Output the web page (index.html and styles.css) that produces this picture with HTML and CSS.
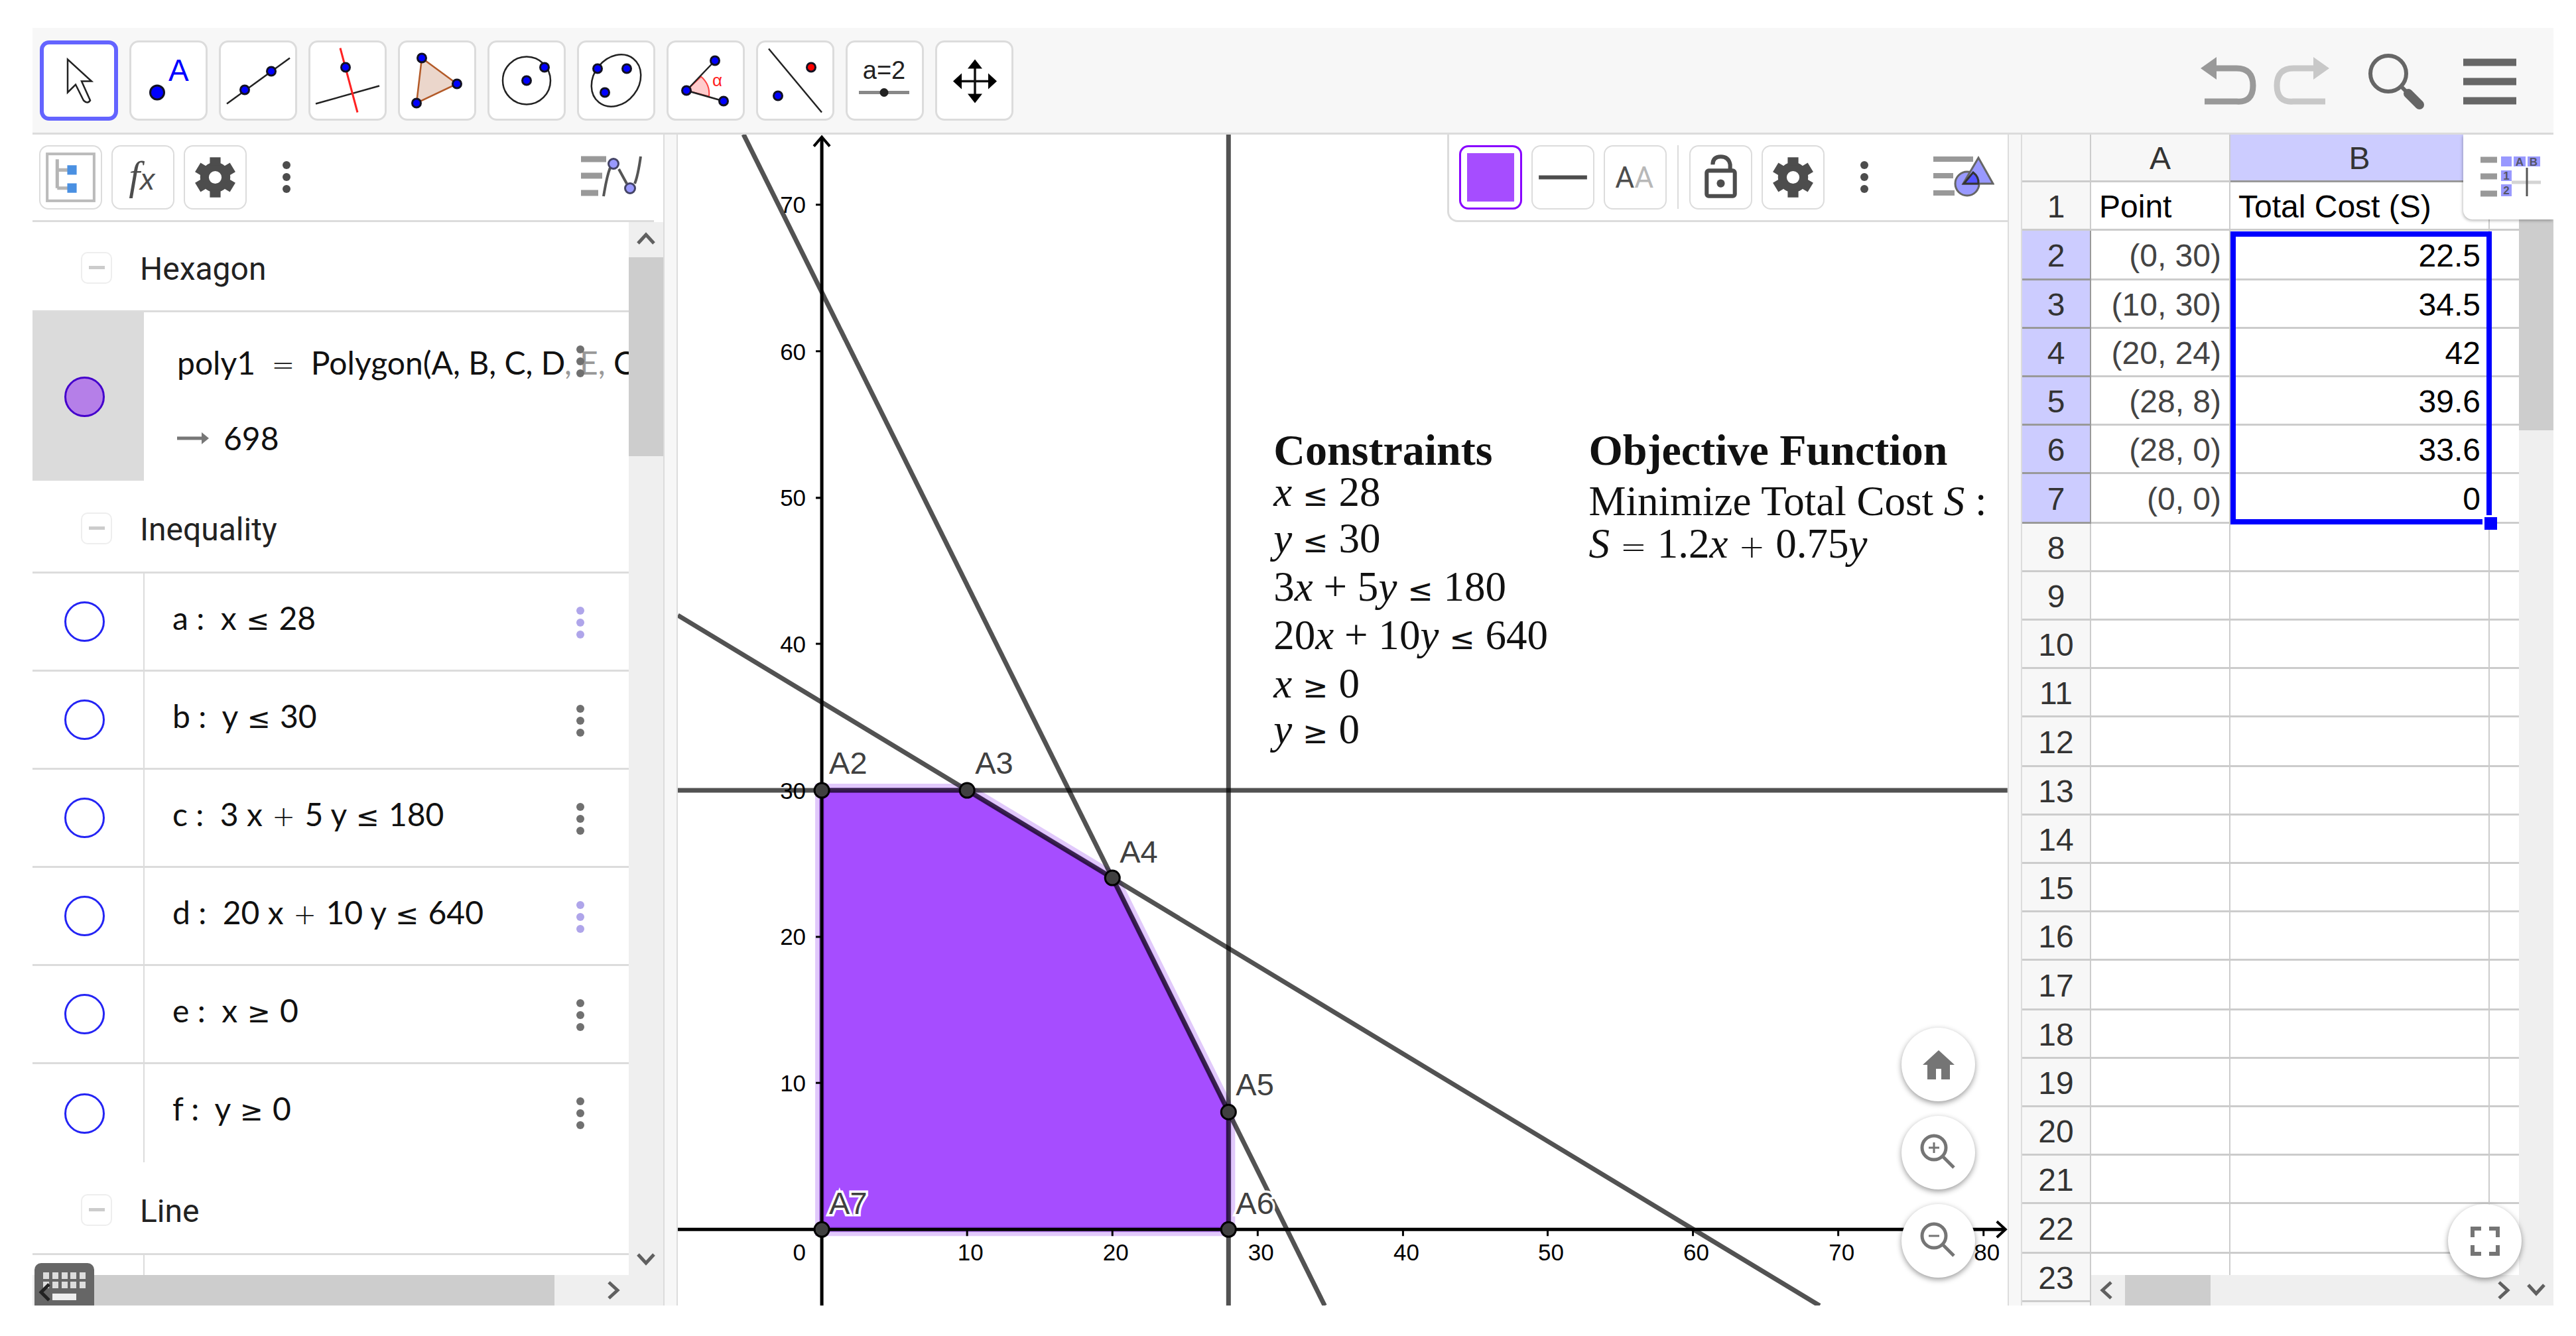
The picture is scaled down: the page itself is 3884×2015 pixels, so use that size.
FILE: index.html
```html
<!DOCTYPE html>
<html lang="en">
<head>
<meta charset="utf-8">
<title>GeoGebra Classic</title>
<link rel="stylesheet" href="styles.css">
</head>
<body>
<main class="app">
  <header class="toolbar">
    <nav class="tools" aria-label="Tools">
      <button class="tool selected" aria-label="Move"><svg viewBox="0 0 118 120"><path d="M42 28V78L54 66L66 90Q72 96 76 90L63 61H78Z" fill="#fff" stroke="#222" stroke-width="2.5"/></svg></button>
      <button class="tool" aria-label="Point"><svg viewBox="0 0 118 120"><circle cx="42" cy="78" r="10.5" class="dot"/><text x="59" y="60" class="ic-a">A</text></svg></button>
      <button class="tool" aria-label="Line"><svg viewBox="0 0 118 120"><path d="M12 95L107 26" class="thin"/><circle cx="39" cy="74" r="6.5" class="dot"/><circle cx="79" cy="46" r="6.5" class="dot"/></svg></button>
      <button class="tool" aria-label="Perpendicular Line"><svg viewBox="0 0 118 120"><path d="M11 95L107 68" class="thin"/><path d="M48 11L74 108" stroke="#f22" stroke-width="3"/><circle cx="56" cy="40" r="6.5" class="dot"/></svg></button>
      <button class="tool" aria-label="Polygon"><svg viewBox="0 0 118 120"><path d="M36 26L89 65L28 94Z" fill="#ebd6cb" stroke="#b35a28" stroke-width="2.5"/><circle cx="36" cy="26" r="6.5" class="dot"/><circle cx="89" cy="65" r="6.5" class="dot"/><circle cx="28" cy="94" r="6.5" class="dot"/></svg></button>
      <button class="tool" aria-label="Circle with Center"><svg viewBox="0 0 118 120"><circle cx="59" cy="60" r="36" class="thin"/><circle cx="59" cy="60" r="6.5" class="dot"/><circle cx="86" cy="40" r="6.5" class="dot"/></svg></button>
      <button class="tool" aria-label="Ellipse"><svg viewBox="0 0 118 120"><ellipse cx="59" cy="60" rx="42" ry="34" transform="rotate(-52 59 60)" class="thin"/><circle cx="31" cy="42" r="6.5" class="dot"/><circle cx="75" cy="42" r="6.5" class="dot"/><circle cx="42" cy="78" r="6.5" class="dot"/></svg></button>
      <button class="tool" aria-label="Angle"><svg viewBox="0 0 118 120"><path d="M30 75L52 54Q66 66 64 84Z" fill="#fcc" stroke="#f44" stroke-width="2"/><path d="M73 30L30 75L86 91" class="thin"/><circle cx="73" cy="30" r="6.5" class="dot"/><circle cx="30" cy="75" r="6.5" class="dot"/><circle cx="86" cy="91" r="6.5" class="dot"/><text x="69" y="68" class="ic-alpha">α</text></svg></button>
      <button class="tool" aria-label="Reflect about Line"><svg viewBox="0 0 118 120"><path d="M19 12L99 108" class="thin"/><circle cx="33" cy="83" r="6.5" class="dot"/><circle cx="83" cy="40" r="6.5" class="dot red"/></svg></button>
      <button class="tool" aria-label="Slider"><svg viewBox="0 0 118 120"><text x="58" y="57" class="ic-slider">a=2</text><path d="M20 78H96" stroke="#888" stroke-width="5"/><circle cx="58" cy="78" r="6.5" fill="#222"/></svg></button>
      <button class="tool" aria-label="Move Graphics View"><svg viewBox="0 0 118 120"><path d="M60 36V86M36 61H84" stroke="#111" stroke-width="3.5"/><path d="M60 28L71 42H49ZM60 94L71 80H49ZM27 61L40 49V73ZM93 61L80 49V73Z"/></svg></button>
    </nav>
    <div class="actions">
      <button class="plain undo" aria-label="Undo"><svg viewBox="0 0 84 76"><path d="M20 18H54Q79 18 79 44T54 68H6" fill="none" stroke="#999" stroke-width="9"/><path d="M0 18L24 1V35Z" fill="#999"/></svg></button>
      <button class="plain redo" aria-label="Redo"><svg viewBox="0 0 84 76"><path d="M64 18H30Q5 18 5 44T30 68H78" fill="none" stroke="#c8c8c8" stroke-width="9"/><path d="M84 18L60 1V35Z" fill="#c8c8c8"/></svg></button>
      <button class="plain search" aria-label="Search"><svg viewBox="0 0 86 86"><circle cx="31" cy="31" r="27" fill="none" stroke="#666" stroke-width="6"/><path d="M50 50L60 60" stroke="#666" stroke-width="6"/><path d="M61 61L78 78" stroke="#666" stroke-width="14" stroke-linecap="round"/></svg></button>
      <button class="plain menu" aria-label="Menu"><svg viewBox="0 0 80 70"><path d="M0 6H80M0 35H80M0 64H80" stroke="#666" stroke-width="11"/></svg></button>
    </div>
  </header>

  <div class="views">
    <section class="algebra" aria-label="Algebra View">
      <div class="stylebar">
        <button class="opt" aria-label="Sort by"><svg viewBox="0 0 94 96"><rect x="12" y="13" width="70" height="70" fill="#fff" stroke="#bbb" stroke-width="4"/><path d="M27 21V64M27 37H43M27 64H43" stroke="#b5b5b5" stroke-width="5" fill="none"/><path d="M42 30H56V44H42ZM42 57H56V71H42Z" fill="#4a90e2"/></svg></button>
        <button class="opt" aria-label="Auxiliary objects"><svg viewBox="0 0 94 96"><text x="26" y="66" class="ic-fx">f<tspan class="ic-fx-x">x</tspan></text></svg></button>
        <button class="opt" aria-label="Settings"><svg viewBox="0 0 94 96"><use href="#gear"/></svg></button>
        <button class="kebab" aria-label="More"><svg viewBox="0 0 20 50"><use href="#dots"/></svg></button>
        <button class="plain viewicon" aria-label="Close style bar"><svg viewBox="0 0 92 64"><path d="M0 5H38M0 30H32M0 56H26" stroke="#999" stroke-width="9"/><path d="M34 61C37 44 39 30 44 18M57 20L69 42M81 42C86 30 88 14 90 1" fill="none" stroke="#555" stroke-width="4"/><circle cx="49" cy="12" r="7.5" fill="#99f" stroke="#446" stroke-width="3"/><circle cx="74" cy="49" r="7.5" fill="#99f" stroke="#446" stroke-width="3"/></svg></button>
      </div>
      <div class="algebra-body">
        <div class="list">
          <div class="group first"><button class="fold" aria-label="Collapse Hexagon"></button><h2>Hexagon</h2></div>
          <div class="item poly">
            <div class="mark"><button class="marble on" aria-label="Hide poly1"></button></div>
            <div class="expr">
              <p>poly1 <span class="op">=</span> Polygon(A, B, C, D<span class="fade">, E,</span> C)</p>
              <p class="result"><svg viewBox="0 0 48 20"><path d="M0 10H40" stroke="#777" stroke-width="5"/><path d="M37 1L48 10L37 19Z" fill="#777"/></svg>698</p>
            </div>
            <button class="kebab" aria-label="More"><svg viewBox="0 0 20 50"><use href="#dots"/></svg></button>
          </div>
          <div class="group"><button class="fold" aria-label="Collapse Inequality"></button><h2>Inequality</h2></div>
          <div class="item"><div class="mark"><button class="marble" aria-label="Show a"></button></div><div class="expr"><p>a :&nbsp; x <span class="op rel">≤</span> 28</p></div><button class="kebab pale" aria-label="More"><svg viewBox="0 0 20 50"><use href="#dots"/></svg></button></div>
          <div class="item"><div class="mark"><button class="marble" aria-label="Show b"></button></div><div class="expr"><p>b :&nbsp; y <span class="op rel">≤</span> 30</p></div><button class="kebab" aria-label="More"><svg viewBox="0 0 20 50"><use href="#dots"/></svg></button></div>
          <div class="item"><div class="mark"><button class="marble" aria-label="Show c"></button></div><div class="expr"><p>c :&nbsp; 3 x <span class="op">+</span> 5 y <span class="op rel">≤</span> 180</p></div><button class="kebab" aria-label="More"><svg viewBox="0 0 20 50"><use href="#dots"/></svg></button></div>
          <div class="item"><div class="mark"><button class="marble" aria-label="Show d"></button></div><div class="expr"><p>d :&nbsp; 20 x <span class="op">+</span> 10 y <span class="op rel">≤</span> 640</p></div><button class="kebab pale" aria-label="More"><svg viewBox="0 0 20 50"><use href="#dots"/></svg></button></div>
          <div class="item"><div class="mark"><button class="marble" aria-label="Show e"></button></div><div class="expr"><p>e :&nbsp; x <span class="op rel">≥</span> 0</p></div><button class="kebab" aria-label="More"><svg viewBox="0 0 20 50"><use href="#dots"/></svg></button></div>
          <div class="item last"><div class="mark"><button class="marble" aria-label="Show f"></button></div><div class="expr"><p>f :&nbsp; y <span class="op rel">≥</span> 0</p></div><button class="kebab" aria-label="More"><svg viewBox="0 0 20 50"><use href="#dots"/></svg></button></div>
          <div class="group"><button class="fold" aria-label="Collapse Line"></button><h2>Line</h2></div>
          <div class="item"><div class="mark"></div></div>
        </div>
        <div class="vscroll"><svg class="arrow" viewBox="0 0 30 30"><use href="#up"/></svg><div class="thumb"></div><svg class="arrow bottom" viewBox="0 0 30 30"><use href="#down"/></svg></div>
      </div>
      <div class="hscroll"><div class="thumb"></div><svg class="arrow" viewBox="0 0 30 30"><use href="#right"/></svg></div>
      <button class="keyboard" aria-label="Open keyboard"><svg viewBox="0 0 90 64"><path d="M13 19H22M27 19H36M41 19H50M54 19H63M68 19H77M13 33H22M27 33H36M41 33H50M54 33H63M68 33H77" stroke="#ddd" stroke-width="10"/><path d="M27 51H63" stroke="#eee" stroke-width="10"/><path d="M22 32L10 44L22 56" fill="none" stroke="#222" stroke-width="5"/></svg></button>
    </section>
    <div class="splitter"></div>

    <section class="graphics" aria-label="Graphics View">
      <svg class="plot" viewBox="0 0 2004 1766" preserveAspectRatio="xMidYMid slice">
        <polygon points="217,989 436,989 655,1121 830,1474 830,1651 217,1651" fill="#a64dff" stroke="#e1c9fb" stroke-width="20" paint-order="stroke"/>
        <polygon points="217,989 436,989 655,1121 830,1474 830,1651 217,1651" fill="none" stroke="#8630dd" stroke-width="8" stroke-opacity=".55"/>
        <g class="axes">
          <path d="M217 6V1766M0 1651H2000" stroke="#000" stroke-width="5"/>
          <path d="M205 18L217 4L229 18M1988 1639L2001 1651L1988 1663" fill="none" stroke="#000" stroke-width="4"/>
          <path d="M436 1651v10M655 1651v10M874 1651v10M1093 1651v10M1311 1651v10M1530 1651v10M1749 1651v10M1968 1651v10M217 1430h-9M217 1210h-9M217 989h-9M217 768h-9M217 548h-9M217 327h-9M217 106h-9" stroke="#000" stroke-width="3"/>
        </g>
        <g class="ticks">
          <text x="193" y="1698" text-anchor="end">0</text>
          <g text-anchor="middle"><text x="441" y="1698">10</text><text x="660" y="1698">20</text><text x="879" y="1698">30</text><text x="1098" y="1698">40</text><text x="1316" y="1698">50</text><text x="1535" y="1698">60</text><text x="1754" y="1698">70</text><text x="1973" y="1698">80</text></g>
          <g text-anchor="end"><text x="193" y="1443">10</text><text x="193" y="1222">20</text><text x="193" y="1002">30</text><text x="193" y="781">40</text><text x="193" y="560">50</text><text x="193" y="340">60</text><text x="193" y="118">70</text></g>
        </g>
        <path class="bound" d="M830 0V1766"/>
        <path class="bound" d="M0 989H2004"/>
        <path class="bound" d="M0 725L1721 1766"/>
        <path class="bound" d="M99 0L975 1766"/>
        <g class="points"><circle cx="217" cy="989" r="11"/><circle cx="436" cy="989" r="11"/><circle cx="655" cy="1121" r="11"/><circle cx="830" cy="1474" r="11"/><circle cx="830" cy="1651" r="11"/><circle cx="217" cy="1651" r="11"/></g>
        <g class="names"><text x="228" y="964">A2</text><text x="448" y="964">A3</text><text x="666" y="1098">A4</text><text x="841" y="1449">A5</text><text x="841" y="1628">A6</text><text x="228" y="1628">A7</text></g>
        <g class="math">
          <text class="bold" x="898" y="498">Constraints</text>
          <text x="898" y="560"><tspan class="it">x</tspan> <tspan class="rel">≤</tspan> 28</text>
          <text x="898" y="630"><tspan class="it">y</tspan> <tspan class="rel">≤</tspan> 30</text>
          <text x="898" y="703">3<tspan class="it">x</tspan> + 5<tspan class="it">y</tspan> <tspan class="rel">≤</tspan> 180</text>
          <text x="898" y="776">20<tspan class="it">x</tspan> + 10<tspan class="it">y</tspan> <tspan class="rel">≤</tspan> 640</text>
          <text x="898" y="849"><tspan class="it">x</tspan> <tspan class="rel">≥</tspan> 0</text>
          <text x="898" y="918"><tspan class="it">y</tspan> <tspan class="rel">≥</tspan> 0</text>
          <text class="bold" x="1373" y="498">Objective Function</text>
          <text x="1373" y="574">Minimize Total Cost <tspan class="it">S</tspan> :</text>
          <text x="1373" y="638"><tspan class="it">S</tspan> <tspan class="sign">=</tspan> 1.2<tspan class="it">x</tspan> <tspan class="sign">+</tspan> 0.75<tspan class="it">y</tspan></text>
        </g>
      </svg>
      <div class="stylebar floating">
        <button class="opt color" aria-label="Color"><span class="swatch"></span></button>
        <button class="opt" aria-label="Line style"><svg viewBox="0 0 94 96"><path d="M11 48H83" stroke="#4d4d4d" stroke-width="6"/></svg></button>
        <button class="opt" aria-label="Label"><svg viewBox="0 0 94 96"><text x="17" y="63" class="ic-aa">A<tspan fill="#b8b8b8">A</tspan></text></svg></button>
        <span class="rule"></span>
        <button class="opt" aria-label="Lock"><svg viewBox="0 0 94 96"><rect x="26" y="38" width="42" height="38" rx="3" class="lock"/><path d="M35 29Q35 17 47 17T61 29V38" class="lock"/><circle cx="47" cy="57" r="6" fill="#4d4d4d"/></svg></button>
        <button class="opt" aria-label="Settings"><svg viewBox="0 0 94 96"><use href="#gear"/></svg></button>
        <button class="kebab" aria-label="More"><svg viewBox="0 0 20 50"><use href="#dots"/></svg></button>
        <button class="plain viewicon" aria-label="Close style bar"><svg viewBox="0 0 92 64"><path d="M0 5H60M0 30H30M0 56H32" stroke="#999" stroke-width="8"/><circle cx="51" cy="42" r="18" fill="#99f" stroke="#666" stroke-width="3"/><path d="M68 3L90 42H45Z" fill="#99f" stroke="#666" stroke-width="3"/><path d="M46 42L60 25Q69 32 68 42Z" fill="#55f" stroke="#333" stroke-width="3"/></svg></button>
      </div>
      <div class="zoomers">
        <button class="round" aria-label="Standard view"><svg viewBox="0 0 60 60"><path d="M30 8L54 30H47V52H34V36H26V52H13V30H6Z"/></svg></button>
        <button class="round" aria-label="Zoom in"><svg viewBox="0 0 60 60"><circle cx="23" cy="22" r="18" class="lens"/><path d="M36 35L53 52" class="lens"/><path d="M23 14V30M15 22H31" stroke="#757575" stroke-width="3"/></svg></button>
        <button class="round" aria-label="Zoom out"><svg viewBox="0 0 60 60"><circle cx="23" cy="22" r="18" class="lens"/><path d="M36 35L53 52" class="lens"/><path d="M15 22H31" stroke="#757575" stroke-width="3"/></svg></button>
      </div>
    </section>
    <div class="splitter"></div>

    <section class="sheet" aria-label="Spreadsheet View">
      <div class="cells">
        <table>
          <colgroup><col class="c-num"><col class="c-a"><col class="c-b"><col></colgroup>
          <thead><tr><th></th><th>A</th><th class="sel">B</th><th></th></tr></thead>
          <tbody>
            <tr><th>1</th><td class="txt">Point</td><td class="txt">Total Cost (S)</td><td></td></tr>
            <tr><th class="sel">2</th><td class="pt">(0, 30)</td><td>22.5</td><td></td></tr>
            <tr><th class="sel">3</th><td class="pt">(10, 30)</td><td>34.5</td><td></td></tr>
            <tr><th class="sel">4</th><td class="pt">(20, 24)</td><td>42</td><td></td></tr>
            <tr><th class="sel">5</th><td class="pt">(28, 8)</td><td>39.6</td><td></td></tr>
            <tr><th class="sel">6</th><td class="pt">(28, 0)</td><td>33.6</td><td></td></tr>
            <tr><th class="sel">7</th><td class="pt">(0, 0)</td><td>0</td><td></td></tr>
            <tr><th>8</th><td></td><td></td><td></td></tr>
            <tr><th>9</th><td></td><td></td><td></td></tr>
            <tr><th>10</th><td></td><td></td><td></td></tr>
            <tr><th>11</th><td></td><td></td><td></td></tr>
            <tr><th>12</th><td></td><td></td><td></td></tr>
            <tr><th>13</th><td></td><td></td><td></td></tr>
            <tr><th>14</th><td></td><td></td><td></td></tr>
            <tr><th>15</th><td></td><td></td><td></td></tr>
            <tr><th>16</th><td></td><td></td><td></td></tr>
            <tr><th>17</th><td></td><td></td><td></td></tr>
            <tr><th>18</th><td></td><td></td><td></td></tr>
            <tr><th>19</th><td></td><td></td><td></td></tr>
            <tr><th>20</th><td></td><td></td><td></td></tr>
            <tr><th>21</th><td></td><td></td><td></td></tr>
            <tr><th>22</th><td></td><td></td><td></td></tr>
            <tr><th>23</th><td></td><td></td><td></td></tr>
            <tr><th></th><td></td><td></td><td></td></tr>
          </tbody>
        </table>
        <div class="selection"><span class="handle"></span></div>
        <div class="hscroll"><svg class="arrow" viewBox="0 0 30 30"><use href="#left"/></svg><div class="thumb"></div><svg class="arrow" viewBox="0 0 30 30"><use href="#right"/></svg></div>
      </div>
      <div class="vscroll"><div class="thumb"></div><svg class="arrow bottom" viewBox="0 0 30 30"><use href="#down"/></svg></div>
      <button class="sheet-toggle" aria-label="Open style bar"><svg viewBox="0 0 92 64"><path d="M0 6H25M0 31H25M0 57H25" stroke="#999" stroke-width="9"/><path d="M31 1H47V16H31ZM50 1H68V16H50ZM71 1H90V16H71ZM31 22H47V38H31ZM31 43H47V61H31Z" fill="#99f"/><path d="M47 40H91" stroke="#d4d4d4" stroke-width="5"/><path d="M70 18V61" stroke="#555" stroke-width="3"/><g class="ic-cells"><text x="59" y="15">A</text><text x="80" y="15">B</text><text x="39" y="36">1</text><text x="39" y="58">2</text></g></svg></button>
      <button class="round full" aria-label="Fullscreen"><svg viewBox="0 0 60 60"><path d="M11 24V11H24M36 11H49V24M49 36V49H36M24 49H11V36" fill="none" stroke="#757575" stroke-width="6"/></svg></button>
    </section>
  </div>
</main>
<svg class="defs" aria-hidden="true"><defs>
  <g id="gear" fill="none" stroke="#4d4d4d"><circle cx="47" cy="48" r="16" stroke-width="13"/><path d="M47 18V30M47 66V78M21 33L31 39M63 57L73 63M21 63L31 57M63 39L73 33" stroke-width="16"/></g>
  <g id="dots"><circle cx="10" cy="7" r="6"/><circle cx="10" cy="25" r="6"/><circle cx="10" cy="43" r="6"/></g>
  <path id="up" d="M3 21L15 8L27 21" class="chev"/>
  <path id="down" d="M3 9L15 22L27 9" class="chev"/>
  <path id="left" d="M21 3L8 15L21 27" class="chev"/>
  <path id="right" d="M9 3L22 15L9 27" class="chev"/>
</defs></svg>
</body>
</html>
```

FILE: styles.css
```css
* { box-sizing: border-box; }

body {
  margin: 0;
  padding: 42px 34px 46px 49px;
  height: 100vh;
  background: #fff;
  font-family: "Liberation Sans", Arial, sans-serif;
}

button { padding: 0; border: 0; background: none; font: inherit; color: inherit; }
button svg { display: block; width: 100%; height: 100%; }
h2, p { margin: 0; font-size: inherit; font-weight: 400; }
.defs { position: absolute; width: 0; height: 0; }

.app { display: flex; flex-direction: column; height: 100%; overflow: hidden; }

/* top toolbar */
.toolbar {
  display: flex;
  justify-content: space-between;
  height: 161px;
  flex: none;
  padding: 19px 56px 0 11px;
  background: #f7f7f7;
  border-bottom: 3px solid #dcdcdc;
}
.tools { display: flex; gap: 17px; }
.tool { width: 118px; height: 121px; background: #fff; border-radius: 14px; box-shadow: inset 0 0 0 3px #dcdcdc; }
.tool.selected { box-shadow: inset 0 0 0 6px #6464ff; }
.actions { display: flex; align-items: center; height: 124px; }
.undo, .redo { width: 84px; height: 76px; }
.redo { margin-left: 26px; }
.search { width: 86px; height: 86px; margin-left: 58px; }
.menu { width: 80px; height: 70px; margin-left: 58px; }
.dot { fill: #00f; stroke: #112; stroke-width: 3px; }
.dot.red { fill: #f00; }
.thin { fill: none; stroke: #222; stroke-width: 2.5px; }
.ic-a { font-size: 46px; fill: #00f; }
.ic-alpha { font-size: 26px; fill: #f22; }
.ic-slider { font-size: 38px; text-anchor: middle; fill: #222; }
.ic-fx { font: italic 60px "Liberation Serif", serif; fill: #4d4d4d; }
.ic-fx-x { font: italic 44px "Liberation Sans", sans-serif; }
.ic-aa { font: 44px Roboto, sans-serif; fill: #4d4d4d; }
.ic-cells { font-size: 17px; font-weight: 700; text-anchor: middle; fill: #556; }

.views { display: flex; flex: 1; min-height: 0; }
.splitter { width: 22px; flex: none; background: #f7f7f7; border: solid #dcdcdc; border-width: 0 2px; }

/* shared style bar */
.stylebar { display: flex; align-items: flex-start; gap: 14px; padding: 16px 0 0 10px; }
.opt { width: 95px; height: 97px; background: #fff; border-radius: 14px; box-shadow: inset 0 0 0 2px #dcdcdc; }
.kebab { width: 20px; height: 50px; margin: 23px 0 0 36px; fill: #4d4d4d; }
.viewicon { width: 92px; height: 64px; margin: 16px 0 0 auto; }
.opt.color { box-shadow: inset 0 0 0 3px #80f; padding: 12px; }
.swatch { display: block; height: 73px; background: #a64dff; }
.lock { fill: none; stroke: #4d4d4d; stroke-width: 6px; }

/* scrollbars */
.vscroll { width: 52px; flex: none; display: flex; flex-direction: column; align-items: center; background: #efefef; }
.hscroll { height: 46px; flex: none; display: flex; align-items: center; background: #efefef; }
.thumb { background: #cdcdcd; }
.vscroll .thumb { width: 52px; }
.hscroll .thumb { height: 46px; }
.arrow { width: 30px; height: 30px; flex: none; }
.arrow.bottom { margin: auto 0 10px; }
.chev { fill: none; stroke: #606060; stroke-width: 5px; }

/* algebra view */
.algebra {
  position: relative;
  display: flex;
  flex-direction: column;
  width: calc(25% + 1px);
  flex: none;
}
.algebra .stylebar { height: 132px; margin-right: 14px; padding-right: 18px; border-bottom: 3px solid #dcdcdc; }
.algebra-body { display: flex; flex: 1; min-height: 0; }
.list { flex: 1; min-width: 0; overflow: hidden; }
.group { display: flex; align-items: center; gap: 42px; height: 137px; padding: 10px 0 0 73px; font: 48px/60px Roboto, sans-serif; color: #222; }
.group.first { height: 133px; padding-top: 8px; }
.fold { display: grid; place-items: center; width: 47px; height: 48px; margin-top: -4px; border: 2px solid #eee; border-radius: 10px; }
.fold::after { content: ""; width: 24px; height: 5px; background: #ccc; }
.item { display: flex; align-items: stretch; position: relative; height: 148px; border-top: 3px solid #dcdcdc; }
.mark { width: 169px; flex: none; display: grid; place-items: center; padding-right: 11px; border-right: 2px solid #dcdcdc; }
.marble { width: 61px; height: 61px; border: 3px solid #2424f4; border-radius: 50%; background: #fff; }
.marble.on { border-color: #4400cc; background: #b57fe8; }
.expr { flex: 1; min-width: 0; overflow: hidden; white-space: nowrap; padding: 37px 0 0 42px; font: 48px/60px Lato, sans-serif; color: #111; }
.op { padding: 0 2px; font: 200 42px/40px "DejaVu Sans", sans-serif; }
.op.rel { font-weight: 400; }
.item > .kebab { position: absolute; right: 63px; top: 49px; margin: 0; fill: #707070; }
.item > .kebab.pale { fill: #afa5ea; }
.item.last { height: 151px; }
.item.poly { height: 257px; }
.poly .mark { background: #dbdbdb; width: 168px; border: 0; }
.poly .expr { padding: 46px 0 0 50px; }
.poly .op { padding: 0 12px; }
.fade { color: #999; }
.result { display: flex; align-items: center; gap: 22px; margin-top: 54px; }
.result svg { width: 48px; height: 20px; }
.algebra .vscroll .arrow:first-child { margin: 11px 0 12px; }
.algebra .vscroll .thumb { height: 300px; }
.algebra .hscroll { padding-left: 46px; }
.algebra .hscroll .thumb { width: 741px; }
.algebra .hscroll .arrow { margin-left: 73px; }
.keyboard { position: absolute; left: 3px; bottom: 0; width: 90px; height: 64px; border-radius: 10px 10px 0 0; background: #666; }

/* graphics view */
.graphics { position: relative; flex: 1; min-width: 0; }
.plot { display: block; width: 100%; height: 100%; }
.bound { stroke: #000; stroke-opacity: .68; stroke-width: 7px; }
.ticks { font-size: 35px; }
.points { fill: #404040; stroke: #000; stroke-width: 3px; }
.names { font-size: 47px; fill: #404040; stroke: #fff; stroke-width: 7px; paint-order: stroke; }
.math { font: 63px "Liberation Serif", serif; fill: #111; }
.math .bold { font-size: 66px; font-weight: 700; }
.it { font-style: italic; }
.math .rel { font: 46px "DejaVu Sans", sans-serif; }
.sign { font: 200 48px "DejaVu Sans", sans-serif; }
.floating {
  position: absolute;
  top: 0;
  right: 0;
  width: 845px;
  height: 132px;
  padding-left: 15px;
  padding-right: 20px;
  background: #fff;
  border: solid #dcdcdc;
  border-width: 0 0 3px 3px;
  border-radius: 0 0 0 16px;
}
.rule { width: 2px; height: 96px; margin: 0 2px; background: #dcdcdc; }
.zoomers { position: absolute; right: 49px; bottom: 42px; display: grid; gap: 22px; }
.round { display: grid; place-items: center; width: 111px; height: 111px; border-radius: 50%; background: #fff; box-shadow: 0 3px 8px #0006; }
.round svg { width: 60px; height: 60px; fill: #757575; }
.lens { fill: none; stroke: #757575; stroke-width: 5px; }

/* spreadsheet */
.sheet { position: relative; display: flex; width: 801px; flex: none; }
.cells { position: relative; flex: 1; min-width: 0; overflow: hidden; }
table { width: 100%; table-layout: fixed; border-collapse: separate; border-spacing: 0; font-size: 48px; line-height: 54px; }
.c-num { width: 104px; }
.c-a { width: 210px; }
.c-b { width: 391px; }
th, td { height: 73px; padding: 3px 12px 0; border: solid #ccc; border-width: 0 2px 3px 0; overflow: hidden; white-space: nowrap; }
thead th { height: 72px; }
tr:nth-child(5n+2) > td, tr:nth-child(5n+2) > th { height: 75px; }
th { padding: 3px 0 0; background: #f7f7f7; color: #333; font-weight: 400; text-align: center; }
th.sel { background: #ccf; border-color: #999; }
td { text-align: right; color: #000; }
td.txt { text-align: left; }
td.pt { color: #444; }
td:last-child, th:last-child { border-right: 0; }
.selection { position: absolute; left: 314px; top: 146px; width: 394px; height: 442px; border: 8px solid #00f; }
.handle { position: absolute; right: -16px; bottom: -16px; width: 22px; height: 22px; background: #00f; border: solid #fff; border-width: 3px 0 0 3px; }
.cells .hscroll { position: absolute; left: 104px; right: 0; bottom: 0; padding: 0 9px; }
.cells .hscroll .thumb { width: 129px; margin: 0 auto 0 12px; }
.sheet .vscroll .thumb { height: 446px; }
.sheet-toggle { position: absolute; right: 0; top: 0; width: 136px; height: 128px; padding: 32px 18px 32px 26px; background: #fff; border-radius: 0 0 0 14px; box-shadow: -1px 2px 4px #0004; }
.full { position: absolute; right: 48px; bottom: 42px; }
```
